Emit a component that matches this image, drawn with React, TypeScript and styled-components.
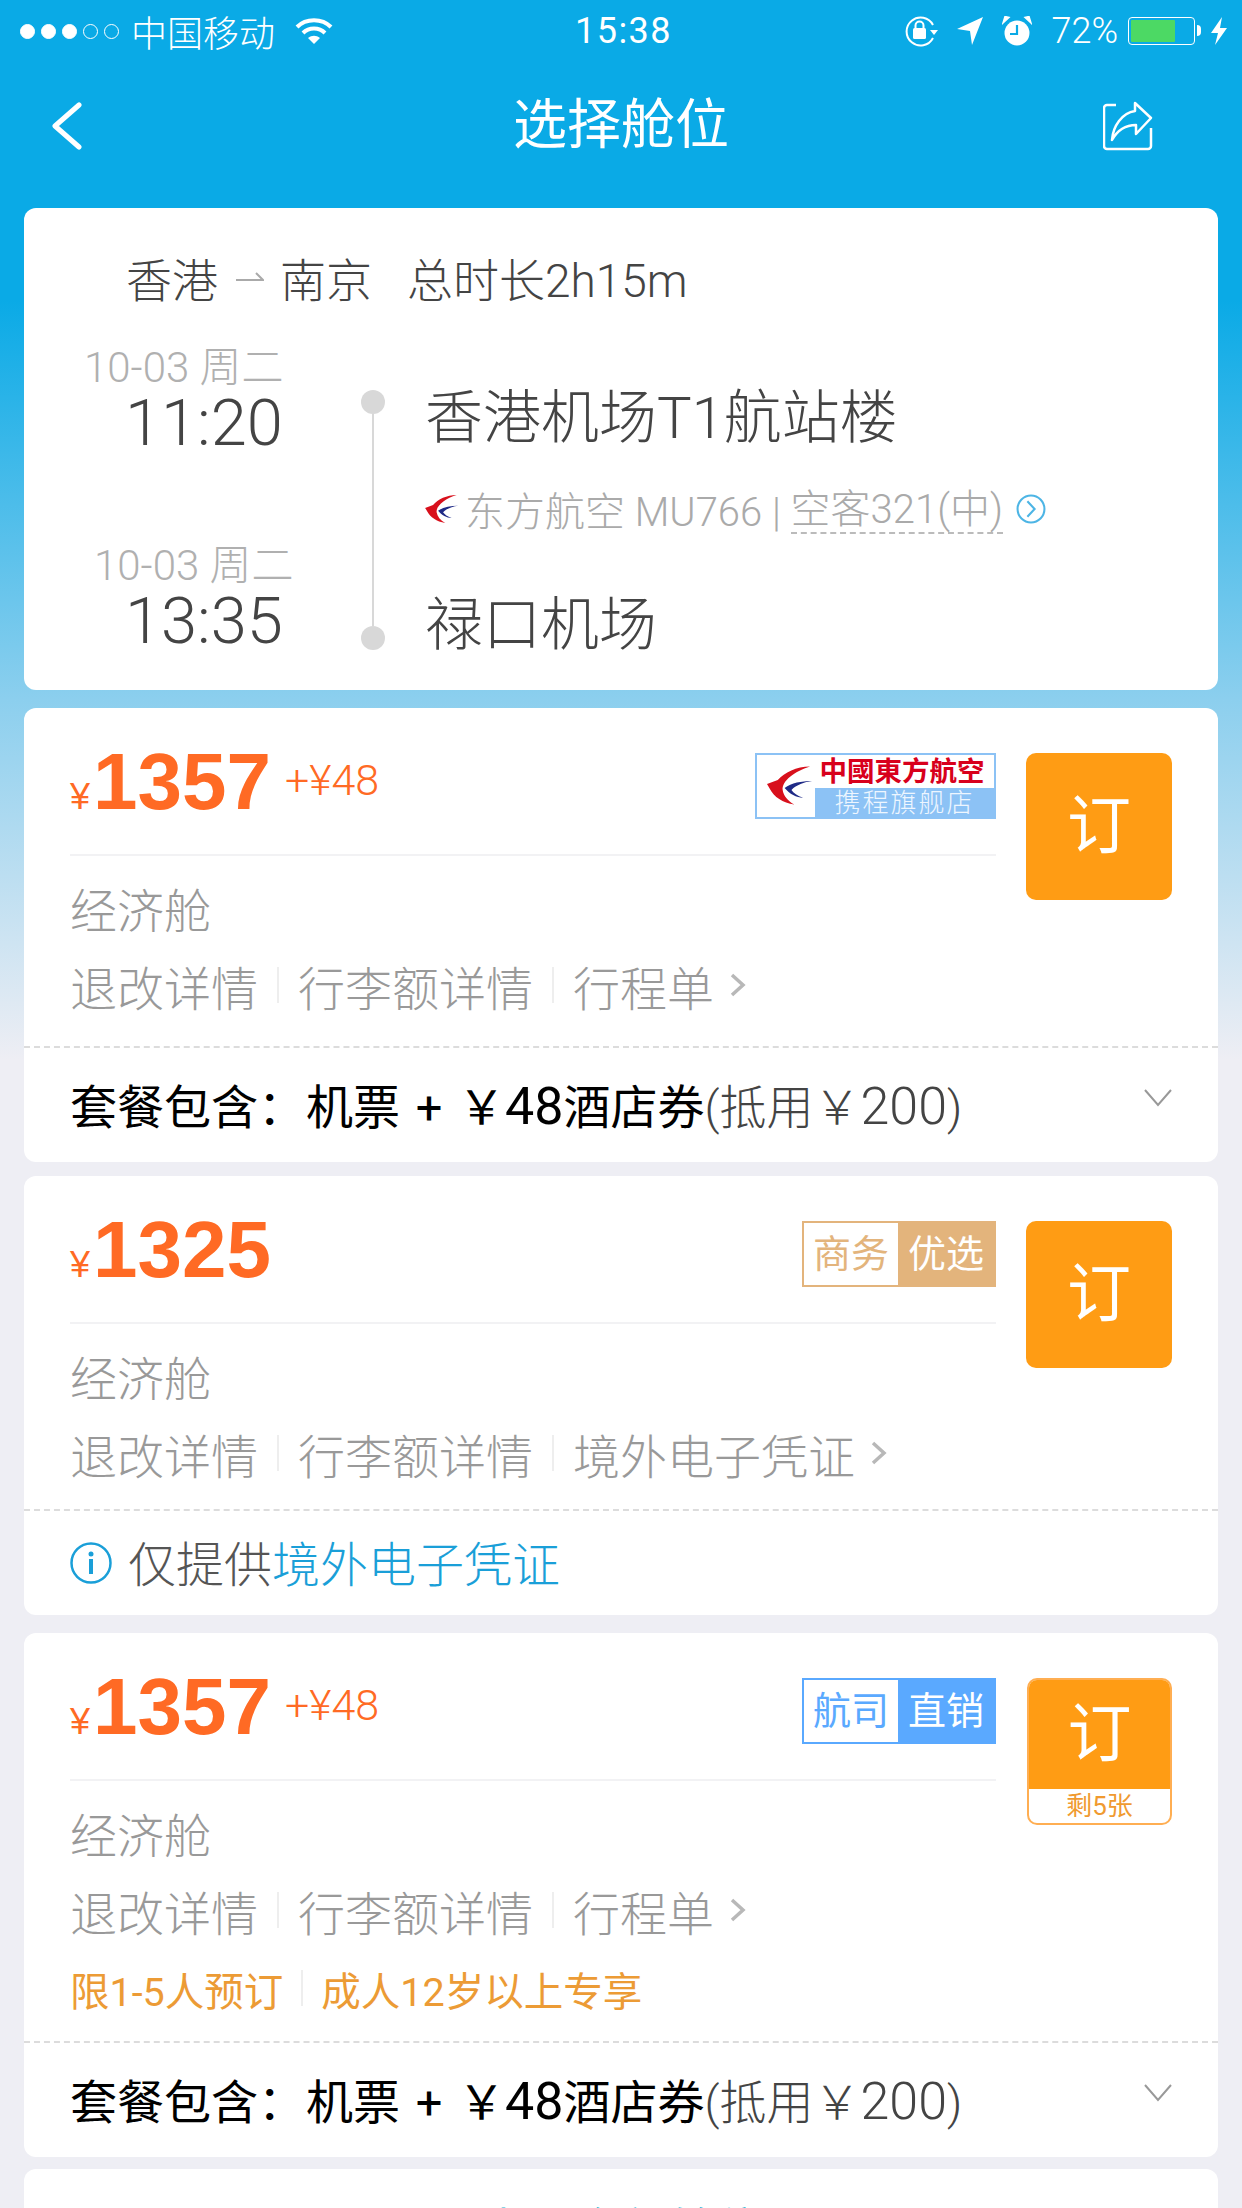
import React from "react";
import styled, { createGlobalStyle } from "styled-components";

const GlobalStyle = createGlobalStyle`
  html, body {
    margin: 0;
    padding: 0;
    background: #eeeef4;
  }
  body {
    font-family: Roboto, "Noto Sans CJK SC", sans-serif;
    font-weight: 300;
  }
`;

const Page = styled.div`
  width: 1242px;
  height: 2208px;
  overflow: hidden;
  background: linear-gradient(180deg, #0aaae6 0, #0aaae6 300px, #8ccfee 700px, #eeeef4 1060px);
`;

const StatusBar = styled.div`
  display: grid;
  grid-template-columns: 1fr auto 1fr;
  align-items: center;
  height: 62px;
  padding: 0 15px 0 20px;
  color: #fff;
  font-size: 36px;
`;

const StatusLeft = styled.div`
  display: flex;
  align-items: center;
`;

const SignalDots = styled.div`
  display: flex;
  gap: 6px;
  margin-right: 12px;
`;

const SignalDot = styled.span<{ $on?: boolean }>`
  width: 15px;
  height: 15px;
  box-sizing: border-box;
  border-radius: 50%;
  border: 1.5px solid #fff;
  background: ${(p) => (p.$on ? "#fff" : "transparent")};
`;

const WifiIcon = styled.svg`
  margin-left: 20px;
`;

const StatusTime = styled.div`
  font-weight: 400;
  letter-spacing: 1.5px;
`;

const StatusRight = styled.div`
  display: flex;
  align-items: center;
  justify-content: flex-end;
  gap: 19px;
`;

const Percent = styled.span`
  margin-right: -9px;
`;

const Battery = styled.div`
  position: relative;
  box-sizing: border-box;
  width: 67px;
  height: 28px;
  padding: 2px;
  border: 1.5px solid #fff;
  border-radius: 4px;
  margin-right: -3px;

  &::after {
    content: "";
    position: absolute;
    right: -7px;
    top: 7px;
    width: 4px;
    height: 11px;
    border-radius: 0 4px 4px 0;
    background: #fff;
  }
`;

const BatteryFill = styled.div`
  height: 100%;
  border-radius: 1px;
  background: #4cd964;
`;

const NavBar = styled.div`
  display: grid;
  grid-template-columns: 1fr auto 1fr;
  align-items: center;
  height: 128px;
  padding: 0 52px;
  color: #fff;
`;

const NavTitle = styled.div`
  font-size: 54px;
  line-height: 64px;
  font-weight: 400;
`;

const NavAction = styled.div`
  display: flex;
  justify-self: end;
  margin-right: 37px;
`;

const NavBack = styled.div`
  display: flex;
`;

const Content = styled.div`
  padding: 18px 24px 0;
`;

const Card = styled.section<{ $gap?: number }>`
  background: #fff;
  border-radius: 12px;
  margin-bottom: ${(p) => p.$gap ?? 0}px;
  overflow: hidden;
`;

const FlightCard = styled(Card)`
  box-sizing: border-box;
  height: 482px;
  padding-top: 44px;
`;

const RouteRow = styled.div`
  display: flex;
  align-items: center;
  height: 50px;
  padding-left: 102px;
  font-size: 46px;
  color: #444;
`;

const RouteArrow = styled.svg`
  margin: 0 16px 0 18px;
`;

const RouteTotal = styled.span`
  margin-left: 35px;
`;

const Timeline = styled.div`
  display: grid;
  grid-template-columns: 297px 24px 1fr;
  column-gap: 40px;
  margin-top: 46px;
`;

const TimesColumn = styled.div`
  display: flex;
  flex-direction: column;
  white-space: nowrap;
`;

const DateText = styled.div<{ $indent: number; $top?: number }>`
  padding-left: ${(p) => p.$indent}px;
  margin-top: ${(p) => p.$top ?? 0}px;
  font-size: 42px;
  line-height: 40px;
  color: #b0b0b0;
`;

const TimeText = styled.div`
  padding-left: 101px;
  margin-top: 2px;
  font-size: 65px;
  line-height: 66px;
  color: #444;
`;

const Rail = styled.div`
  display: flex;
  flex-direction: column;
  align-items: center;
  height: 260px;
  margin-top: 42px;
`;

const RailDot = styled.span`
  flex: none;
  width: 24px;
  height: 24px;
  border-radius: 50%;
  background: #d8d8d8;
`;

const RailLine = styled.span`
  flex: 1;
  width: 2px;
  background: #d8d8d8;
`;

const PlacesColumn = styled.div`
  display: flex;
  flex-direction: column;
`;

const PlaceName = styled.div<{ $top: number }>`
  margin-top: ${(p) => p.$top}px;
  font-size: 58px;
  line-height: 60px;
  color: #444;
`;

const FlightInfo = styled.div`
  display: flex;
  align-items: center;
  height: 50px;
  margin-top: 36px;
  font-size: 40px;
  color: #aaa;
  white-space: pre;
`;

const PlaneType = styled.span`
  border-bottom: 2px dashed #bbb;
  line-height: 44px;
  margin-top: 4px;
`;

const InfoChevron = styled.svg`
  margin-left: 13px;
`;

const OfferMain = styled.div<{ $height: number }>`
  display: flex;
  gap: 30px;
  box-sizing: border-box;
  height: ${(p) => p.$height}px;
  padding: 45px 46px 0;
`;

const OfferBody = styled.div`
  flex: 1;
  min-width: 0;
`;

const OfferTop = styled.div`
  display: flex;
  justify-content: space-between;
  align-items: flex-start;
  box-sizing: border-box;
  height: 103px;
  border-bottom: 2px solid #f2f2f4;
`;

const PriceRow = styled.div`
  display: flex;
  align-items: baseline;
  color: #ff6a24;
  line-height: 58px;
`;

const PriceCurrency = styled.span`
  font-family: "Liberation Sans", sans-serif;
  font-size: 36px;
  margin-right: 3px;
`;

const PriceValue = styled.span`
  font-family: "Liberation Sans", sans-serif;
  font-size: 80px;
  font-weight: 700;
`;

const PriceExtra = styled.span`
  margin-left: 14px;
  font-size: 43px;
  transform: translateY(-14px);
`;

const AirlineBadge = styled.div`
  position: relative;
  box-sizing: border-box;
  display: flex;
  width: 241px;
  height: 66px;
  border: 2px solid #8cc2f5;
  background: #fff;
`;

const BadgeColumn = styled.div`
  flex: 1;
  display: flex;
  flex-direction: column;
  margin-left: 2px;
  text-align: center;
`;

const BadgeName = styled.div`
  height: 33px;
  padding-right: 5px;
  font-size: 27.5px;
  line-height: 33px;
  font-weight: 700;
  color: #d8001c;
  white-space: nowrap;
`;

const BadgeShop = styled.div`
  flex: 1;
  background: #8cc2f5;
  color: #eef6ff;
  font-size: 26px;
  line-height: 31px;
  letter-spacing: 2px;
  white-space: nowrap;
`;

const TwoTone = styled.div<{ $color: string }>`
  display: flex;
  box-sizing: border-box;
  width: 194px;
  height: 66px;
  border: 2px solid ${(p) => p.$color};
  font-size: 38px;
  font-weight: 400;
  line-height: 62px;
  text-align: center;
  white-space: nowrap;
`;

const ToneLight = styled.span<{ $color: string }>`
  flex: 1;
  color: ${(p) => p.$color};
`;

const ToneSolid = styled.span<{ $color: string }>`
  width: 96px;
  background: ${(p) => p.$color};
  color: #fff;
`;

const CabinName = styled.div`
  margin-top: 28px;
  font-size: 47px;
  line-height: 56px;
  color: #999;
`;

const LinksRow = styled.div`
  display: flex;
  align-items: center;
  gap: 19px;
  margin-top: 15px;
  height: 60px;
  font-size: 47px;
  color: #999;
  white-space: nowrap;
`;

const LinkDivider = styled.span`
  width: 2px;
  height: 36px;
  background: #eeeeee;
`;

const LinkChevron = styled.svg`
  margin-left: -4px;
`;

const NotesRow = styled.div`
  display: flex;
  align-items: center;
  gap: 18px;
  margin-top: 24px;
  height: 48px;
  font-size: 39.5px;
  font-weight: 400;
  color: #ec9b35;
  white-space: nowrap;
`;

const BookButton = styled.div`
  flex: none;
  width: 146px;
  height: 147px;
  border-radius: 10px;
  background: #ff9c14;
  color: #fff;
  font-size: 64px;
  font-weight: 400;
  line-height: 147px;
  text-align: center;
`;

const StockButton = styled.div`
  flex: none;
  display: flex;
  flex-direction: column;
  box-sizing: border-box;
  width: 145px;
  height: 147px;
  margin-left: 1px;
  border: 2px solid #ffae52;
  border-radius: 10px;
  overflow: hidden;
  text-align: center;
`;

const StockTop = styled.div`
  height: 109px;
  background: #ff9c14;
  color: #fff;
  font-size: 64px;
  font-weight: 400;
  line-height: 109px;
`;

const StockBottom = styled.div`
  flex: 1;
  color: #f09a30;
  font-size: 26px;
  font-weight: 400;
  line-height: 34px;
`;

const OfferFooter = styled.div<{ $height: number }>`
  display: flex;
  align-items: center;
  justify-content: space-between;
  box-sizing: border-box;
  height: ${(p) => p.$height}px;
  padding: 0 45px 4px 46px;
  border-top: 2px dashed #dcdcdc;
  font-size: 47px;
  font-weight: 400;
  color: #000;
  white-space: pre;
`;

const PackageItems = styled.span`
  margin-left: 1px;
  word-spacing: 4px;
`;

const Amount = styled.span`
  font-size: 52px;
`;

const MutedText = styled.span`
  color: #444;
  font-weight: 300;
`;

const DownChevronIcon = styled.svg`
  margin-bottom: 10px;
`;

const InfoNote = styled.div`
  display: flex;
  align-items: center;
  gap: 16px;
  font-size: 48px;
  font-weight: 300;
  color: #555;
`;

const InfoIcon = styled.svg`
  margin-top: 4px;
`;

const Highlight = styled.span`
  color: #1a9fd8;
`;

const MoreCard = styled(Card)`
  height: 120px;
  padding-top: 32px;
  text-align: center;
  font-size: 47px;
  line-height: 60px;
  font-weight: 400;
  color: #1ab0d0;
`;

const ChevronBack = () => (
  <svg width="30" height="48" viewBox="0 0 30 48" fill="none" stroke="#fff" strokeWidth="5" strokeLinecap="round" strokeLinejoin="round">
    <path d="M27 3 L3 24 L27 45" />
  </svg>
);

const ShareIcon = () => (
  <svg width="50" height="50" viewBox="0 0 50 50" fill="none" stroke="#fff" strokeWidth="2.5" strokeLinejoin="round">
    <path d="M13 4 H4 a3 3 0 0 0 -3 3 V45 a3 3 0 0 0 3 3 H45 a3 3 0 0 0 3 -3 V27" />
    <path d="M32 2 L48 17 L33 33 V24 C22 24 14 30 9 39 C10 25 19 12 32 10 Z" />
  </svg>
);

const RotationLockIcon = () => (
  <svg width="34" height="32" viewBox="0 0 34 32" fill="none">
    <path d="M29 23 A14 14 0 1 1 29 10" stroke="#fff" strokeWidth="2" />
    <path d="M26 15 H34 L30 20 Z" fill="#fff" />
    <rect x="9" y="13" width="13" height="11" rx="1.5" fill="#fff" />
    <path d="M11.5 13 V10.5 a4 4 0 0 1 8 0 V13" stroke="#fff" strokeWidth="2" />
  </svg>
);

const LocationIcon = () => (
  <svg width="26" height="28" viewBox="0 0 26 28">
    <path d="M26 0 L15 28 L13 14 L0 12 Z" fill="#fff" />
  </svg>
);

const AlarmIcon = () => (
  <svg width="30" height="30" viewBox="0 0 30 30">
    <circle cx="15" cy="17" r="12.5" fill="#fff" />
    <path d="M15 9 V18 H8" stroke="#0aaae6" strokeWidth="2.2" fill="none" />
    <path d="M1 7 L7 1.5 L3 0.5 Z M29 7 L23 1.5 L27 0.5 Z" fill="#fff" stroke="#fff" strokeWidth="1.5" />
  </svg>
);

const BoltIcon = () => (
  <svg width="16" height="28" viewBox="0 0 16 28">
    <path d="M11 0 L0 16 H7 L4 28 L16 11 H9 Z" fill="#fff" />
  </svg>
);

const EasternLogo: React.FC<{ width: number; height: number; className?: string }> = ({ width, height, className }) => (
  <svg className={className} width={width} height={height} viewBox="0 0 47 39">
    <path d="M44 0 C30 0 18 6 11 14 L0 18 L3 23 C7 31 16 37 28 39 C21 35 17 30 16 24 C15 15 28 5 44 0 Z" fill="#d8101c" />
    <path d="M46 15 C35 15 25 17 18 22 C23 28 30 32 37 32 C31 30 27 27 25 24 C30 19 38 16 46 15 Z" fill="#1f2a86" />
  </svg>
);

const SmallLogo = styled(EasternLogo)`
  margin-right: 6px;
`;

const BadgeLogo = styled(EasternLogo)`
  flex: none;
  margin: 11px 0 0 10px;
`;

const SmallChevron = () => (
  <LinkChevron width="17" height="26" viewBox="0 0 17 26" fill="none" stroke="#b8b8b8" strokeWidth="3.5">
    <path d="M3 3 L14 13 L3 23" />
  </LinkChevron>
);

const OfferLinks: React.FC<{ last: string }> = ({ last }) => (
  <LinksRow>
    退改详情
    <LinkDivider />
    行李额详情
    <LinkDivider />
    {last}
    <SmallChevron />
  </LinksRow>
);

const PackageFooter = () => (
  <OfferFooter $height={116}>
    <span>
      套餐包含：
      <PackageItems>
        机票 + ￥<Amount>48</Amount>酒店券
        <MutedText>
          (抵用￥<Amount>200</Amount>)
        </MutedText>
      </PackageItems>
    </span>
    <DownChevronIcon width="30" height="20" viewBox="0 0 30 20" fill="none" stroke="#999" strokeWidth="2">
      <path d="M2 2 L15 17 L28 2" />
    </DownChevronIcon>
  </OfferFooter>
);

const Price: React.FC<{ value: string; extra?: string }> = ({ value, extra }) => (
  <PriceRow>
    <PriceCurrency>¥</PriceCurrency>
    <PriceValue>{value}</PriceValue>
    {extra && <PriceExtra>{extra}</PriceExtra>}
  </PriceRow>
);

const App: React.FC = () => (
  <Page>
    <GlobalStyle />
    <StatusBar>
      <StatusLeft>
        <SignalDots>
          <SignalDot $on />
          <SignalDot $on />
          <SignalDot $on />
          <SignalDot />
          <SignalDot />
        </SignalDots>
        中国移动
        <WifiIcon width="38" height="28" viewBox="0 0 38 28" fill="none" stroke="#fff" strokeWidth="4">
          <path d="M2 10 C11 1 27 1 36 10" />
          <path d="M8 16 C14 10 24 10 30 16" />
          <path d="M13 21 L19 27 L25 21 C21 18 17 18 13 21 Z" fill="#fff" stroke="none" />
        </WifiIcon>
      </StatusLeft>
      <StatusTime>15:38</StatusTime>
      <StatusRight>
        <RotationLockIcon />
        <LocationIcon />
        <AlarmIcon />
        <Percent>72%</Percent>
        <Battery>
          <BatteryFill style={{ width: "72%" }} />
        </Battery>
        <BoltIcon />
      </StatusRight>
    </StatusBar>

    <NavBar>
      <NavBack>
        <ChevronBack />
      </NavBack>
      <NavTitle>选择舱位</NavTitle>
      <NavAction>
        <ShareIcon />
      </NavAction>
    </NavBar>

    <Content>
      <FlightCard $gap={18}>
        <RouteRow>
          香港
          <RouteArrow width="28" height="12" viewBox="0 0 28 12" fill="none" stroke="#aaa" strokeWidth="2">
            <path d="M0 9 H27 L20 2" />
          </RouteArrow>
          南京
          <RouteTotal>总时长2h15m</RouteTotal>
        </RouteRow>
        <Timeline>
          <TimesColumn>
            <DateText $indent={60}>10-03 周二</DateText>
            <TimeText>11:20</TimeText>
            <DateText $indent={70} $top={90}>10-03 周二</DateText>
            <TimeText>13:35</TimeText>
          </TimesColumn>
          <Rail>
            <RailDot />
            <RailLine />
            <RailDot />
          </Rail>
          <PlacesColumn>
            <PlaceName $top={40}>香港机场T1航站楼</PlaceName>
            <FlightInfo>
              <SmallLogo width={34} height={28} />
              东方航空 MU766 | <PlaneType>空客321(中)</PlaneType>
              <InfoChevron width="30" height="30" viewBox="0 0 29 29" fill="none" stroke="#4db5e5" strokeWidth="2">
                <circle cx="14.5" cy="14.5" r="13" />
                <path d="M11 7 L18 14.5 L11 22" />
              </InfoChevron>
            </FlightInfo>
            <PlaceName $top={61}>禄口机场</PlaceName>
          </PlacesColumn>
        </Timeline>
      </FlightCard>

      <Card $gap={14}>
        <OfferMain $height={338}>
          <OfferBody>
            <OfferTop>
              <Price value="1357" extra="+¥48" />
              <AirlineBadge>
                <BadgeLogo width={46} height={39} />
                <BadgeColumn>
                  <BadgeName>中國東方航空</BadgeName>
                  <BadgeShop>携程旗舰店</BadgeShop>
                </BadgeColumn>
              </AirlineBadge>
            </OfferTop>
            <CabinName>经济舱</CabinName>
            <OfferLinks last="行程单" />
          </OfferBody>
          <BookButton>订</BookButton>
        </OfferMain>
        <PackageFooter />
      </Card>

      <Card $gap={18}>
        <OfferMain $height={333}>
          <OfferBody>
            <OfferTop>
              <Price value="1325" />
              <TwoTone $color="#e3b47c">
                <ToneLight $color="#e3b47c">商务</ToneLight>
                <ToneSolid $color="#e3b47c">优选</ToneSolid>
              </TwoTone>
            </OfferTop>
            <CabinName>经济舱</CabinName>
            <OfferLinks last="境外电子凭证" />
          </OfferBody>
          <BookButton>订</BookButton>
        </OfferMain>
        <OfferFooter $height={106}>
          <InfoNote>
            <InfoIcon width="42" height="42" viewBox="0 0 42 42" fill="none" stroke="#1a9fd8" strokeWidth="2.5">
              <circle cx="21" cy="21" r="19.5" />
              <circle cx="21" cy="12" r="2.5" fill="#1a9fd8" stroke="none" />
              <path d="M21 17 V32" strokeWidth="4" />
            </InfoIcon>
            <span>
              仅提供<Highlight>境外电子凭证</Highlight>
            </span>
          </InfoNote>
        </OfferFooter>
      </Card>

      <Card $gap={12}>
        <OfferMain $height={408}>
          <OfferBody>
            <OfferTop>
              <Price value="1357" extra="+¥48" />
              <TwoTone $color="#5aa9ff">
                <ToneLight $color="#5aa9ff">航司</ToneLight>
                <ToneSolid $color="#5aa9ff">直销</ToneSolid>
              </TwoTone>
            </OfferTop>
            <CabinName>经济舱</CabinName>
            <OfferLinks last="行程单" />
            <NotesRow>
              限1-5人预订
              <LinkDivider />
              成人12岁以上专享
            </NotesRow>
          </OfferBody>
          <StockButton>
            <StockTop>订</StockTop>
            <StockBottom>剩5张</StockBottom>
          </StockButton>
        </OfferMain>
        <PackageFooter />
      </Card>

      <MoreCard>查看全部舱位</MoreCard>
    </Content>
  </Page>
);

export default App;
